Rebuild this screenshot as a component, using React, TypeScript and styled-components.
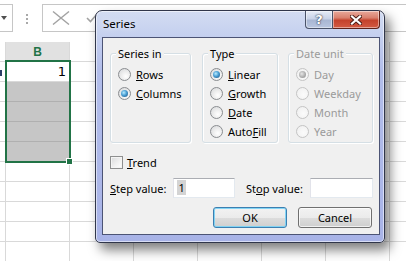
import React from 'react';
import styled, { createGlobalStyle } from 'styled-components';

const GlobalStyle = createGlobalStyle`
  html, body {
    margin: 0;
    padding: 0;
  }
  body {
    width: 406px;
    height: 261px;
    overflow: hidden;
    background: #fff;
    font-family: 'Noto Sans', 'Open Sans', sans-serif;
  }
`;

const GRID = '#d9d9d9';
const GREEN = '#217346';

const Screen = styled.div`
  position: relative;
  width: 406px;
  height: 261px;
  overflow: hidden;
  background: #fff;
`;

/* ---------- the worksheet behind the dialog ---------- */

const FormulaBar = styled.div`
  display: flex;
  align-items: flex-start;
  height: 42px;
  padding-top: 4px;
  box-sizing: border-box;
`;

const NameBox = styled.div`
  box-sizing: border-box;
  width: 13px;
  height: 28px;
  border: 1px solid #c6c6c6;
  border-left: none;
  display: flex;
  align-items: center;
  padding-left: 1px;
  &::before {
    content: '';
    border-left: 3px solid transparent;
    border-right: 3px solid transparent;
    border-top: 4px solid #505050;
  }
`;

const Grip = styled.div`
  display: flex;
  flex-direction: column;
  gap: 2px;
  margin: 10px 0 0 13px;
  span {
    width: 2px;
    height: 2px;
    background: #a9a9a9;
  }
`;

const FormulaBox = styled.div`
  box-sizing: border-box;
  flex: 1;
  height: 28px;
  margin-left: 14px;
  border: 1px solid #c6c6c6;
  border-right: none;
  display: flex;
  align-items: center;
  gap: 16px;
  padding-left: 9px;
`;

const Sheet = styled.div`
  display: grid;
  grid-template-columns: 6px repeat(7, 64px);
  grid-auto-rows: 20px;
`;

type Place = { $r: number; $c: number };

const Corner = styled.div`
  grid-row: 1;
  grid-column: 1;
  box-sizing: border-box;
  border-right: 1px solid ${GRID};
  border-bottom: 1px solid ${GRID};
`;

const ColHead = styled.div<Place & { $active?: boolean }>`
  grid-row: ${(p) => p.$r};
  grid-column: ${(p) => p.$c};
  box-sizing: border-box;
  display: flex;
  align-items: center;
  justify-content: center;
  background: ${(p) => (p.$active ? '#e1e1e1' : '#fff')};
  border-right: 1px solid ${GRID};
  border-bottom: 1px solid ${(p) => (p.$active ? '#c4c4c4' : GRID)};
  color: ${GREEN};
  font-family: 'Liberation Sans', sans-serif;
  font-weight: 700;
  font-size: 12px;
`;

const RowHead = styled.div<Place & { $mark?: boolean }>`
  grid-row: ${(p) => p.$r};
  grid-column: ${(p) => p.$c};
  box-sizing: border-box;
  border-right: 1px solid ${GRID};
  border-bottom: 1px solid ${GRID};
  display: flex;
  align-items: center;
  &::before {
    content: '';
    display: ${(p) => (p.$mark ? 'block' : 'none')};
    width: 2px;
    height: 6px;
    margin-top: 2px;
    background: #2c3f66;
  }
`;

const Cell = styled.div<Place & { $fill?: boolean }>`
  grid-row: ${(p) => p.$r};
  grid-column: ${(p) => p.$c};
  box-sizing: border-box;
  border-right: 1px solid ${GRID};
  border-bottom: 1px solid ${(p) => (p.$fill ? '#b0b0b0' : GRID)};
  background: ${(p) => (p.$fill ? '#c6c6c6' : '#fff')};
  font-family: 'DejaVu Sans', sans-serif;
  font-size: 13px;
  line-height: 19px;
  text-align: right;
  padding-right: 3px;
  color: #000;
`;

const Selection = styled.div`
  grid-column: 2;
  grid-row: 2 / span 5;
  position: relative;
  margin: -2px -1px -1px -1px;
  border: 2px solid ${GREEN};
  &::after {
    content: '';
    position: absolute;
    right: -4px;
    bottom: -4px;
    width: 5px;
    height: 5px;
    background: ${GREEN};
    border: 1px solid #fff;
  }
`;

/* ---------- the Series dialog ---------- */

const Dialog = styled.div`
  position: absolute;
  left: 95px;
  top: 10px;
  width: 290px;
  height: 233px;
  box-sizing: border-box;
  display: flex;
  flex-direction: column;
  border: 1px solid #30364a;
  border-radius: 7px 7px 5px 5px;
  background: linear-gradient(
    to bottom,
    #d3dcf2 0px,
    #c5d0ef 24px,
    #b2bdea 60px,
    #a8b3e7 100%
  );
  box-shadow: inset 0 0 0 1px rgba(255, 255, 255, 0.55),
    5px 7px 12px rgba(0, 0, 0, 0.5);
`;

const TitleBar = styled.div`
  display: flex;
  align-items: flex-start;
  height: 26px;
  flex-shrink: 0;
`;

const Title = styled.div`
  margin: 5px 0 0 7px;
  font-size: 11.5px;
  line-height: 16px;
  color: #000;
  text-shadow: 0 0 6px rgba(255, 255, 255, 0.9);
`;

const Caption = styled.div`
  display: flex;
  margin-left: auto;
  margin-right: 4px;
`;

const CaptionButton = styled.div<{ $close?: boolean }>`
  box-sizing: border-box;
  height: 18px;
  width: ${(p) => (p.$close ? 47 : 28)}px;
  display: flex;
  align-items: center;
  justify-content: center;
  border: 1px solid ${(p) => (p.$close ? '#5e2119' : '#4a5369')};
  border-top: none;
  ${(p) => (p.$close ? 'border-left: none;' : '')}
  border-radius: ${(p) => (p.$close ? '0 0 4px 0' : '0 0 0 4px')};
  background: ${(p) =>
    p.$close
      ? 'linear-gradient(to bottom, #e9a99b 0%, #d9806e 40%, #c4422c 55%, #d35a43 100%)'
      : 'linear-gradient(to bottom, #e7ecf6 0%, #c9d3e8 45%, #a9b7d3 55%, #b9c6e0 100%)'};
  box-shadow: inset 0 0 0 1px rgba(255, 255, 255, 0.45);
  color: #fff;
  font-family: 'DejaVu Sans', sans-serif;
  font-weight: 700;
  font-size: 13px;
  text-shadow: 0 0 1px #2b3346, 0 0 2px #2b3346;
`;

const Client = styled.div`
  flex: 1;
  margin: 0 4px 7px 6px;
  box-sizing: border-box;
  border: 1px solid #4c5475;
  background: #f0f0f0;
  padding: 15px 6px 0 7px;
  display: flex;
  flex-direction: column;
  font-size: 11px;
  color: #000;
`;

const Groups = styled.div`
  display: flex;
  align-items: stretch;
`;

const Group = styled.div<{ $w: number; $gap?: number }>`
  box-sizing: border-box;
  width: ${(p) => p.$w}px;
  margin-left: ${(p) => p.$gap ?? 0}px;
  border: 1px solid #d5dfe5;
  border-radius: 3px;
  box-shadow: inset 1px 1px 0 #fff, 1px 1px 0 #fff;
  padding: 0 0 1px 7px;
`;

const Legend = styled.div<{ $disabled?: boolean }>`
  display: table;
  margin: -8px 0 3px -2px;
  padding: 0 2px;
  line-height: 16px;
  background: #f0f0f0;
  color: ${(p) => (p.$disabled ? '#9a9a9a' : '#000')};
`;

const Option = styled.div<{ $disabled?: boolean }>`
  display: flex;
  align-items: center;
  gap: 5px;
  height: 19px;
  color: ${(p) => (p.$disabled ? '#9a9a9a' : '#000')};
`;

const Radio = styled.span<{ $checked?: boolean; $disabled?: boolean }>`
  box-sizing: border-box;
  flex-shrink: 0;
  width: 13px;
  height: 13px;
  border-radius: 50%;
  border: 1px solid ${(p) => (p.$disabled ? '#c4c4c4' : '#8a8d90')};
  background: ${(p) =>
    p.$disabled
      ? 'radial-gradient(circle at 60% 60%, #fbfbfb 0%, #eeeeee 100%)'
      : 'radial-gradient(circle at 62% 66%, #ffffff 0%, #f1f1f1 35%, #d4d6d8 100%)'};
  display: flex;
  align-items: center;
  justify-content: center;
  &::after {
    content: '';
    display: ${(p) => (p.$checked ? 'block' : 'none')};
    width: 7px;
    height: 7px;
    border-radius: 50%;
    background: ${(p) =>
      p.$disabled
        ? 'radial-gradient(circle at 40% 40%, #e6e6e6 0%, #a9a9a9 60%, #8c8c8c 100%)'
        : 'radial-gradient(circle at 40% 38%, #b9ecff 0%, #4a9fd4 45%, #1a4a78 100%)'};
  }
`;

const Key = styled.span`
  text-decoration: underline;
  text-underline-offset: 1px;
`;

const TrendRow = styled.div`
  display: flex;
  align-items: center;
  gap: 4px;
  height: 19px;
  margin-top: 10px;
`;

const Check = styled.span`
  box-sizing: border-box;
  width: 13px;
  height: 13px;
  border: 1px solid #8e8f8f;
  background: linear-gradient(135deg, #d9dadb 0%, #f2f2f2 60%, #ffffff 100%);
  box-shadow: inset 0 0 0 1px #f4f4f4;
`;

const StepRow = styled.div`
  display: flex;
  align-items: center;
  height: 20px;
  margin-top: 6px;
`;

const FieldLabel = styled.span<{ $w: number; $gap?: number }>`
  width: ${(p) => p.$w}px;
  margin-left: ${(p) => p.$gap ?? 0}px;
`;

const Input = styled.div<{ $w: number }>`
  box-sizing: border-box;
  width: ${(p) => p.$w}px;
  height: 20px;
  background: #fff;
  border: 1px solid #e3e9ef;
  border-top-color: #abadb3;
  border-left-color: #e2e3ea;
  padding: 1px 0 0 3px;
  line-height: 16px;
`;

const Picked = styled.span`
  background: #d4d4d4;
  padding: 0 1px;
`;

const Buttons = styled.div`
  display: flex;
  justify-content: flex-end;
  gap: 11px;
  margin-top: 9px;
  padding-right: 1px;
`;

const Button = styled.div<{ $default?: boolean }>`
  box-sizing: border-box;
  width: 74px;
  height: 21px;
  display: flex;
  align-items: center;
  justify-content: center;
  border-radius: 3px;
  border: 1px solid ${(p) => (p.$default ? '#3c7fb1' : '#707070')};
  background: linear-gradient(
    to bottom,
    #f2f2f2 0%,
    #ebebeb 50%,
    #dddddd 50%,
    #cfcfcf 100%
  );
  box-shadow: inset 0 0 0 1px
    ${(p) => (p.$default ? 'rgba(120, 210, 245, 0.9)' : 'rgba(255, 255, 255, 0.7)')};
`;

const CloseIcon = () => (
  <svg width="12" height="10" viewBox="0 0 12 10">
    <path d="M2 1.5 L10 8.5 M10 1.5 L2 8.5" stroke="#4a1b14" strokeWidth="4" strokeLinecap="square" />
    <path d="M2 1.5 L10 8.5 M10 1.5 L2 8.5" stroke="#fff" strokeWidth="2.2" strokeLinecap="square" />
  </svg>
);

const CancelIcon = () => (
  <svg width="18" height="14" viewBox="0 0 18 14">
    <path d="M1 0.5 L17 13.5 M17 0.5 L1 13.5" stroke="#a3a3a3" strokeWidth="1.4" />
  </svg>
);

const EnterIcon = () => (
  <svg width="12" height="10" viewBox="0 0 12 10">
    <path d="M1 5 L4.5 8.5 L11 1" stroke="#a3a3a3" strokeWidth="1.6" fill="none" />
  </svg>
);

const COLS = ['B', 'C', 'D', 'E', 'F', 'G', 'H'];
const ROWS = 10;

export default function App() {
  return (
    <Screen>
      <GlobalStyle />
      <FormulaBar>
        <NameBox />
        <Grip>
          <span />
          <span />
          <span />
        </Grip>
        <FormulaBox>
          <CancelIcon />
          <EnterIcon />
        </FormulaBox>
      </FormulaBar>

      <Sheet>
        <Corner />
        {COLS.map((c, ci) => (
          <ColHead key={c} $r={1} $c={ci + 2} $active={c === 'B'}>
            {c === 'B' ? c : ''}
          </ColHead>
        ))}
        {Array.from({ length: ROWS }, (_, r) => (
          <React.Fragment key={r}>
            <RowHead $r={r + 2} $c={1} $mark={r === 0} />
            {COLS.map((c, ci) => (
              <Cell key={c} $r={r + 2} $c={ci + 2} $fill={c === 'B' && r > 0 && r < 5}>
                {c === 'B' && r === 0 ? '1' : ''}
              </Cell>
            ))}
          </React.Fragment>
        ))}
        <Selection />
      </Sheet>

      <Dialog>
        <TitleBar>
          <Title>Series</Title>
          <Caption>
            <CaptionButton>?</CaptionButton>
            <CaptionButton $close>
              <CloseIcon />
            </CaptionButton>
          </Caption>
        </TitleBar>
        <Client>
          <Groups>
            <Group $w={81}>
              <Legend>Series in</Legend>
              <Option>
                <Radio />
                <span>
                  <Key>R</Key>ows
                </span>
              </Option>
              <Option>
                <Radio $checked />
                <span>
                  <Key>C</Key>olumns
                </span>
              </Option>
            </Group>
            <Group $w={76} $gap={11}>
              <Legend>Type</Legend>
              <Option>
                <Radio $checked />
                <span>
                  <Key>L</Key>inear
                </span>
              </Option>
              <Option>
                <Radio />
                <span>
                  <Key>G</Key>rowth
                </span>
              </Option>
              <Option>
                <Radio />
                <span>
                  <Key>D</Key>ate
                </span>
              </Option>
              <Option>
                <Radio />
                <span>
                  Auto<Key>F</Key>ill
                </span>
              </Option>
            </Group>
            <Group $w={85} $gap={10}>
              <Legend $disabled>Date unit</Legend>
              <Option $disabled>
                <Radio $checked $disabled />
                <span>Day</span>
              </Option>
              <Option $disabled>
                <Radio $disabled />
                <span>Weekday</span>
              </Option>
              <Option $disabled>
                <Radio $disabled />
                <span>Month</span>
              </Option>
              <Option $disabled>
                <Radio $disabled />
                <span>Year</span>
              </Option>
            </Group>
          </Groups>

          <TrendRow>
            <Check />
            <span>
              <Key>T</Key>rend
            </span>
          </TrendRow>

          <StepRow>
            <FieldLabel $w={64}>
              <Key>S</Key>tep value:
            </FieldLabel>
            <Input $w={62}>
              <Picked>1</Picked>
            </Input>
            <FieldLabel $w={65} $gap={11}>
              St<Key>o</Key>p value:
            </FieldLabel>
            <Input $w={63} />
          </StepRow>

          <Buttons>
            <Button $default>OK</Button>
            <Button>Cancel</Button>
          </Buttons>
        </Client>
      </Dialog>
    </Screen>
  );
}
